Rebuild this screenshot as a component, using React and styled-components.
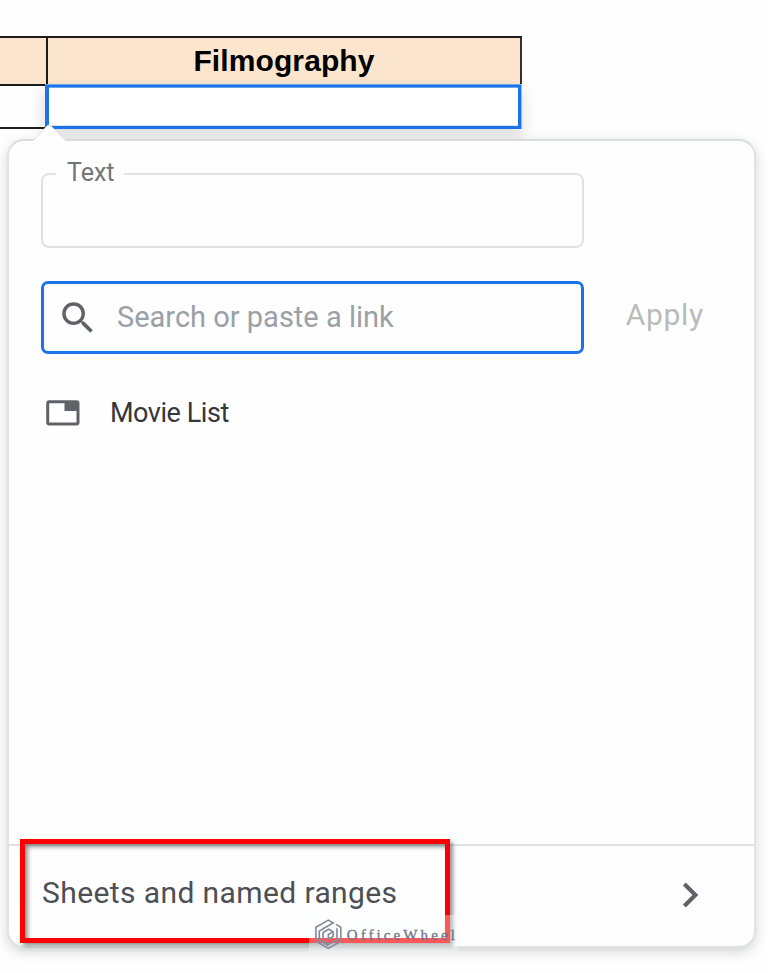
import React from "react";
import styled, { createGlobalStyle } from "styled-components";

const GlobalStyle = createGlobalStyle`
  * {
    box-sizing: border-box;
  }

  body {
    margin: 0;
    background: #fefefe;
    font-family: Roboto, "Liberation Sans", sans-serif;
  }
`;

const Page = styled.div`
  width: 768px;
  height: 973px;
  padding-top: 36px;
  overflow: hidden;
`;

const Sheet = styled.div`
  display: grid;
  grid-template-columns: 46px 476px;
  grid-template-rows: 48px 45px;
`;

const HeaderCell = styled.div`
  border-top: 2px solid #1c1c1c;
  border-left: ${({ $first }) => ($first ? "none" : "2px solid #1c1c1c")};
  border-right: ${({ $first }) => ($first ? "none" : "2px solid #33302d")};
  background: #fce5cd;
  color: #000;
  font: bold 30px/45px "Liberation Sans", Arial, sans-serif;
  letter-spacing: 0.1px;
  text-align: center;
`;

const Cell = styled.div`
  border-top: 2px solid #1c1c1c;
  border-bottom: 2px solid #1c1c1c;
`;

const ActiveCell = styled.div`
  position: relative;
  margin: 1px 1px 0 -1px;
  border: 3px solid #1a73e8;
  border-left-width: 4px;
  border-top-width: 2px;
  background: #fff;
  box-shadow: 0 -1px 0 #6ba4ef, 1px 0 0 #8fbaf3, inset 0 1px 0 #6ba4ef,
    inset 0 -1px 0 #d5e5fb, 0 7px 13px 2px rgba(60, 70, 67, 0.16);
`;

const Popover = styled.div`
  position: relative;
  display: flex;
  flex-direction: column;
  width: 749px;
  height: 809px;
  margin: 10px 0 0 7px;
  border: 2px solid #e0e2e6;
  border-top-color: #d9dbdf;
  border-radius: 17px;
  background: #fefefe;
  box-shadow: 0 4px 12px rgba(60, 67, 64, 0.22);
`;

const Pointer = styled.svg`
  position: absolute;
  top: -18px;
  left: 21px;
`;

const Form = styled.div`
  display: flex;
  flex: 1;
  flex-direction: column;
  padding: 16px 50px 0 32px;
`;

const TextField = styled.fieldset`
  width: 543px;
  height: 91px;
  margin: 0;
  padding: 0 0 0 13px;
  border: 2px solid #e0e2e4;
  border-radius: 8px;
`;

const Legend = styled.legend`
  height: 33px;
  padding: 0 9px 0 11px;
  color: #70757a;
  font-size: 25px;
  line-height: 31px;
`;

const SearchRow = styled.div`
  display: flex;
  align-items: center;
  justify-content: space-between;
  margin-top: 33px;
`;

const SearchBox = styled.div`
  display: flex;
  align-items: center;
  width: 543px;
  height: 73px;
  padding-left: 13px;
  border: 3px solid #1a73e8;
  border-radius: 7px;
`;

const Placeholder = styled.span`
  margin: -1px 0 0 18px;
  color: #9aa0a6;
  font-size: 29px;
  line-height: 36px;
  white-space: nowrap;
`;

const Apply = styled.button`
  margin-bottom: 6px;
  padding: 0;
  border: 0;
  background: none;
  color: #b9bbbb;
  font: 30px/36px Roboto, sans-serif;
  letter-spacing: 0.7px;
`;

const Suggestion = styled.div`
  display: flex;
  align-items: center;
  margin: 41px 0 0 5px;
  color: #35363a;
  font-size: 27px;
  letter-spacing: -0.45px;
  line-height: 36px;

  svg {
    margin-right: 30px;
  }
`;

const Footer = styled.div`
  display: flex;
  align-items: center;
  justify-content: space-between;
  height: 102px;
  padding: 0 39px 2px 33px;
  border-top: 2px solid #e0e1e7;
  color: #4c4f54;
  font-size: 30px;
`;

const FooterLabel = styled.span`
  margin-top: -5px;
  letter-spacing: 0.4px;
`;

// Red frame drawn over the footer row
const Highlight = styled.div`
  position: absolute;
  top: 839px;
  left: 20px;
  width: 430px;
  height: 104px;
  border: 5px solid #fe0000;
  box-shadow: 3px 3px 4px rgba(40, 50, 50, 0.5),
    inset 3px 3px 4px rgba(40, 50, 50, 0.5);
`;

const Watermark = styled.div`
  position: absolute;
  top: 915px;
  left: 309px;
  display: flex;
  align-items: center;
  width: 149px;
  height: 38px;
  padding-left: 5px;
  background: rgba(250, 251, 253, 0.35);
  color: #70778b;
  font: 15px/20px "Liberation Serif", serif;
  letter-spacing: 3.1px;

  span {
    margin: 2px 0 0 4px;
    -webkit-text-stroke: 0.3px #70778b;
  }
`;

const SearchIcon = () => (
  <svg width="42" height="42" viewBox="0 0 24 24" fill="#5f6368">
    <path d="M15.5 14h-.79l-.28-.27A6.471 6.471 0 0 0 16 9.5 6.5 6.5 0 1 0 9.5 16c1.61 0 3.09-.59 4.23-1.57l.27.28v.79l5 4.99L20.49 19l-4.99-5zm-6 0C7.01 14 5 11.99 5 9.5S7.01 5 9.5 5 14 7.01 14 9.5 11.99 14 9.5 14z" />
  </svg>
);

const TabIcon = () => (
  <svg width="34" height="26" viewBox="0 0 34 26">
    <rect x="1.7" y="1.7" width="30.3" height="22.3" rx="1.5" fill="none" stroke="#5f6368" strokeWidth="3" />
    <path d="M18.5 1H32v10H18.5z" fill="#5f6368" />
  </svg>
);

const ChevronIcon = () => (
  <svg width="50" height="50" viewBox="0 0 24 24" fill="#5f6368">
    <path d="M10 6 8.59 7.41 13.17 12l-4.58 4.59L10 18l6-6z" />
  </svg>
);

const WheelLogo = () => (
  <svg width="30" height="34" viewBox="0 0 30 34" fill="none" stroke="#858a9b" strokeWidth="1.7">
    <path d="M2 22V10L15 2.500l5 3L9.500 11.500" />
    <path d="M23 7l5 3v15M24 11v12l-9 5-5-3" />
    <path d="M2 24.500 15 32l13-7.500M5.500 23V14l5-3" />
    <path d="M9.500 23v-7.500l6-3.500 4.500 2.500v5L15 22.500v-5l5-3" />
    <path d="M4 22.500l11 6.500" />
  </svg>
);

const App = () => (
  <Page>
    <GlobalStyle />
    <Sheet>
      <HeaderCell $first />
      <HeaderCell>Filmography</HeaderCell>
      <Cell />
      <ActiveCell />
    </Sheet>
    <Popover>
      <Pointer width="40" height="20" viewBox="0 0 40 20">
        <path d="M1 20 L17 3 Q19 1 21 3 L38 20z" fill="#fefefe" />
        <path d="M1 18 Q4 17 6 15 L17 3 Q19 1 21 3 L35 17 L38 18" fill="none" stroke="#dfe1e5" strokeWidth="1" />
      </Pointer>
      <Form>
        <TextField>
          <Legend>Text</Legend>
        </TextField>
        <SearchRow>
          <SearchBox>
            <SearchIcon />
            <Placeholder>Search or paste a link</Placeholder>
          </SearchBox>
          <Apply>Apply</Apply>
        </SearchRow>
        <Suggestion>
          <TabIcon />
          Movie List
        </Suggestion>
      </Form>
      <Footer>
        <FooterLabel>Sheets and named ranges</FooterLabel>
        <ChevronIcon />
      </Footer>
    </Popover>
    <Highlight />
    <Watermark>
      <WheelLogo />
      <span>OfficeWheel</span>
    </Watermark>
  </Page>
);

export default App;
